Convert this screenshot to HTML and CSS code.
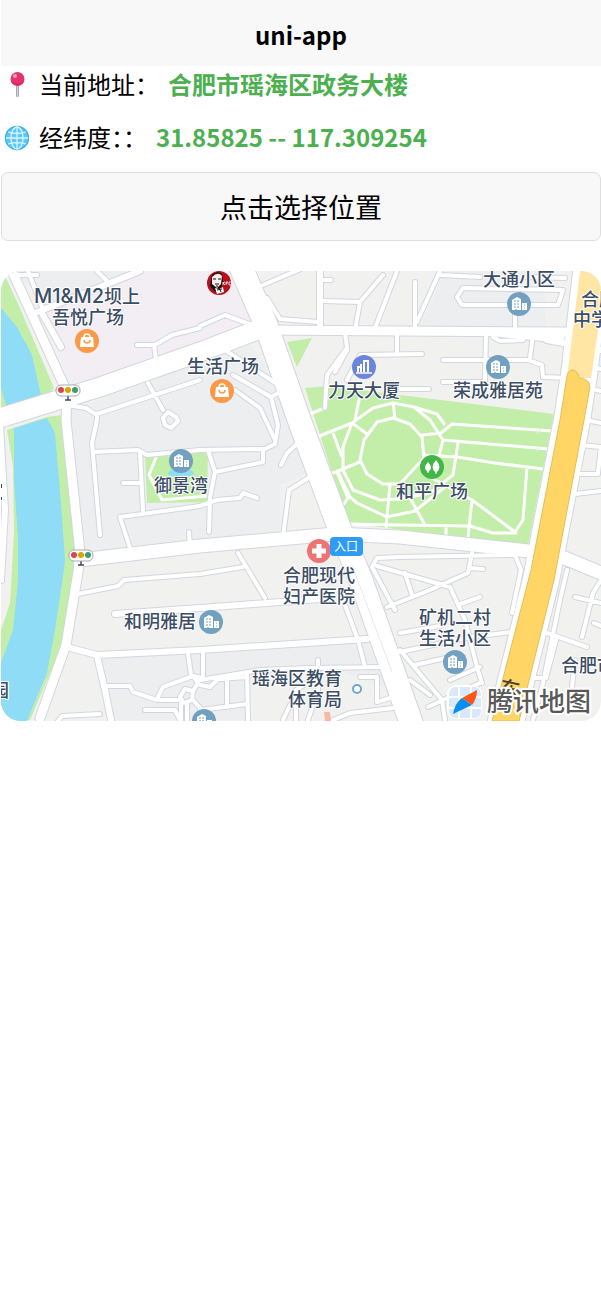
FILE: index.html
```
<!DOCTYPE html>
<html lang="zh-CN">

<head>
  <meta charset="UTF-8">
  <meta name="viewport" content="width=device-width, initial-scale=1.0">
  <title>uni-app</title>
  <link rel="stylesheet" href="styles.css">
</head>

<body>
  <header class="nav">
    <h1 class="title">uni-app</h1>
  </header>
  <main class="content">
    <div class="info">
      <p class="row">
        <svg class="icon" viewBox="0 0 28 28" aria-hidden="true">
          <rect x="12" y="13" width="3" height="14" rx="1" fill="#a9a4b8" />
          <rect x="13" y="13" width="1" height="14" fill="#d4d0dc" />
          <circle cx="13.500" cy="9" r="7" fill="#e5346c" />
          <path d="M7 11a7 7 0 0 0 13 0c-3 3-10 3-13 0z" fill="#d62a64" />
          <circle cx="11" cy="6" r="2" fill="#ff9dbb" />
        </svg>
        <span class="label">当前地址：</span>
        <span class="value">合肥市瑶海区政务大楼</span>
      </p>
      <p class="row">
        <svg class="icon" viewBox="0 0 28 28" aria-hidden="true">
          <circle cx="13" cy="15" r="12" fill="#5cc8fa" />
          <g fill="none" stroke="#d8f5ff" stroke-width="1.300">
            <circle cx="13" cy="15" r="11.500" stroke="#3fb0e6" />
            <ellipse cx="13" cy="15" rx="6" ry="11" />
            <path d="M13 4v22M2 15h22M4 9q9 3 18 0M4 21q9-3 18 0" />
          </g>
        </svg>
        <span class="label">经纬度：：</span>
        <span class="value">31.85825 -- 117.309254</span>
      </p>
    </div>
    <button class="choose" type="button">点击选择位置</button>

    <svg class="map" viewBox="1 271 600 450" role="img" aria-label="地图">
      <defs>
        <path id="lane" d="M12 275H37M28 271L42 307M97 271L107 281M200 326L225 315L252 325M200 328L172 335L155 345L137 345M154 345L156 360
          M67 405L86 408L97 415L97 420L92 443L100 535M97 414L200 380M148 383L163 410M163 418L168 412L176 417L178 421L171 428L165 425Z
          M225 350L280 386M233 375L271 397L280 392M271 397L278 425L275 444L263 450M235 390L260 408L275 440
          M93 452L138 450L147 455L200 450L263 449L263 462L215 472M208 450L215 472L210 497L209 532M123 483H140M140 452L143 511
          M120 517L200 506L217 500L240 498L243 493L257 498M120 517L131 551M189 532L190 547
          M298 443L287 453L281 465M313 475L289 490L283 537
          M267 298L280 319L318 322M323 280H331M323 301L360 302L383 275M360 302L355 330M397 271L375 328
          M345 333L347 348L327 375L325 408M335 372L347 350M347 380L360 355L422 354M397 334V352M263 285L303 268
          M415 282V330M440 271L417 322M440 275L480 277M525 277L565 278M457 297L463 288L563 290L558 305L462 305ZM515 305V330
          M486 335L485 382M443 360L528 360L542 365L543 377L570 378M530 358L533 335M493 337L500 341L523 340M443 382H485M400 389H429
          M586 365L601 369M583 387L601 391M580 419L601 423M580 445L601 447L598 473M578 474H598M575 494L601 491
          M78 594L118 586L124 580L200 574L243 567M238 553L265 598M105 686L130 686L133 692L157 700L178 700M157 699L163 687L193 676L203 678
          M188 653L191 675M180 697L185 689L193 691L192 700L184 703ZM181 703V721M187 703V721M145 710H175L180 720M58 721L62 716L100 714M193 676L198 683L193 691M193 700L202 710
          M200 680L260 670L310 668L383 667M203 651V675M247 672L248 720M200 710L247 704M200 685L210 687L218 679L247 677M227 680V707
          M345 605L358 640L365 667M318 660V690L308 720M318 676L296 690V720M360 677H377V702L390 698M393 708L350 713L333 720M283 720L290 705
          M400 557L515 555M472 553L468 573L430 590M470 568L483 569M515 555L521 570L512 613M400 557L377 558L372 567L395 610
          M387 607L425 592L468 573M377 566L450 587L465 620L477 667L482 683M405 573L412 595M458 605L480 597M400 633L440 626M400 652L470 637L513 632
          M415 665L450 657M428 707L480 683M450 680L480 667M400 650L442 700L445 720M410 680L430 695
          M601 580L593 593L582 637M575 597L601 603M547 633L587 647M594 623L601 626M535 678H546M567 570L560 600L543 683L533 720M575 660L570 705M556 640L546 678" />
        <path id="street" d="M35 313L140 271M43 315L61 347M320 271V328M115 614L200 608L320 599M67 647L97 655L200 650L367 639M97 656L105 690L111 720M547 340L601 350M0 425L5 510L1 580" />
        <path id="road" d="M12 271L67 392L66 420L80 553L78 572L66 645L40 718M266 330L400 331L570 332M495 332L560 338" />
        <path id="avenue" d="M80 560L200 546L335 534M335 534L400 537L528 551M555 554L601 573" />
        <path id="main" d="M0 418L100 387L200 352L265 327" />
        <path id="diagonal" d="M240 265L266 325L301 425L339 527L361 580L412 725" />
        <path id="expressway" d="M592 265L579 375L572 420L541 580L506 721" />
        <g id="bag">
          <circle r="12" fill="#fa9a48" />
          <path d="M-6-4H6L7 6H-7Z" fill="#fff" />
          <path d="M-3-4a3 3 0 0 1 6 0" fill="none" stroke="#fff" stroke-width="1.500" />
          <path d="M-3-1a3 3 0 0 0 6 0" fill="none" stroke="#fa9a48" stroke-width="1.500" />
        </g>
        <g id="estate">
          <circle r="12" fill="#72a0c0" />
          <path d="M-7 6V-4L-2-7L2-5V6ZM3 6V-1H8V6Z" fill="#fff" />
          <path d="M-5-3H-3M-2-3H0M-5 0H-3M-2 0H0M-5 3H-3M-2 3H0M5 1H6M5 4H6M-3 5V6" stroke="#72a0c0" stroke-width="1.200" />
        </g>
        <g id="signal">
          <path d="M0 6V10M-3 10H3" stroke="#454a63" stroke-width="1.500" />
          <rect x="-12" y="-5" width="24" height="11" rx="5" fill="#fff" stroke="#a9a9b2" />
          <circle cx="-7" r="3" fill="#d94848" />
          <circle r="3" fill="#d9a300" />
          <circle cx="7" r="3" fill="#3b9e6c" />
        </g>
      </defs>

      <rect class="land" x="1" y="271" width="600" height="450" />
      <path class="mall" d="M45 312L140 271H240L264 325L72 392Z" />
      <path class="block" d="M12 271H140L50 305ZM70 410L250 345L285 390L315 470L280 485V540L82 557ZM445 271H545V328H420ZM100 657L365 640L390 690L330 667L247 672V720H112Z" />
      <path class="green" d="M1 271L7 280L20 308L37 348L54 388L42 400L1 410ZM7 430L47 417L62 415L75 553V570L60 650L30 720H1V630L10 603L14 533L13 467Z" />
      <path class="water" d="M1 308L17 327L32 355L42 400L8 412L1 388ZM14 428L47 418L55 433L61 503L65 560L64 570L55 630L47 673L27 721H1V663L13 630L18 580V537L14 480Z" />
      <path class="green" d="M305 388L330 386L400 395L554 414L528 545L467 538L348 523ZM287 342L312 338L297 367ZM145 457L208 452L207 502L147 503Z" />
      <path class="path" d="M377 422L393 418L410 424L422 437L424 458L410 473L400 484H383L367 474L360 460L364 440ZM352 423L343 447V470L353 490L380 500L400 499L430 493L453 475L458 443M352 423L373 408L393 403L414 407L430 420L443 440L439 456
        M337 470L350 497L357 503L387 517L415 511L445 487M307 415L325 408M317 437L352 423L367 434M328 475L360 462M333 433L342 457M337 472L348 498L341 508M390 484L386 528M393 403L395 418M422 435L441 433L452 424L553 431M443 440L548 449
        M423 455L457 457L495 463L543 469M527 467L523 520L515 532L495 517L472 500L430 477M350 524L400 525L470 526L493 533H517M472 500L468 537M446 526V536M410 498L425 525M414 407L437 414L445 425M360 395L355 420M157 455L149 475L162 500L207 496" />
      <ellipse class="water" cx="181" cy="473" rx="13" ry="4" />

      <g class="casing">
        <use href="#lane" class="lane" />
        <use href="#street" class="street" />
        <use href="#road" class="road" />
        <use href="#avenue" class="avenue" />
        <use href="#main" class="main" />
        <use href="#diagonal" class="diagonal" />
        <use href="#expressway" class="expressway" />
      </g>
      <g class="surface">
        <use href="#lane" class="lane" />
        <use href="#street" class="street" />
        <use href="#road" class="road" />
        <use href="#avenue" class="avenue" />
        <use href="#main" class="main" />
        <use href="#diagonal" class="diagonal" />
        <use href="#expressway" class="expressway" />
      </g>
      <path class="divider" d="M352 565L392 672M537 429V434M540 429V434M537 446V451M540 446V451" />
      <path class="tunnel" d="M580 271H601L601 310L591 378H567Z" />
      <path class="elevated" d="M567 376Q568 370 573 370Q578 371 579 378Q583 378 586 380Q590 382 590 387L584 420L554 580L519 721H492L531 570L560 420Z" />
      <path class="spill" d="M324 712H330L331 721H325Z" />
      <path d="M1 484H2V488H1ZM1 497H2V500H1Z" fill="#3c4d66" />

      <use href="#bag" x="87" y="341" />
      <use href="#bag" x="222" y="391" />
      <use href="#estate" x="519" y="304" />
      <use href="#estate" x="498" y="367" />
      <use href="#estate" x="181" y="461" />
      <use href="#estate" x="211" y="622" />
      <use href="#estate" x="455" y="662" />
      <use href="#estate" x="204" y="721" />
      <use href="#signal" x="68" y="390" />
      <use href="#signal" x="81" y="555" />

      <g transform="translate(219 283)">
        <circle r="12" fill="#b5121b" />
        <path d="M-7-8Q-2-13 3-9L4-2L2 6L-4 9L-9 3Z" fill="#1b1414" />
        <path d="M-7-6Q-1-12 3-7L2 1L-2 5L-7 1Z" fill="#f6eeee" />
        <path d="M-6-4H-3M-1-4H2M-4 1H0M-2 2V4" stroke="#1b1414" />
        <path d="M-4 5L0 6L4 4L5 9L-2 11Z" fill="#fff" />
        <path d="M-2 7L3 6M0 5L2 9" stroke="#1b1414" />
        <path d="M4-1V2M4 0L6-1M4 0L6 2M7 2V-1H9M7 0H9M12-1H10V2H12" fill="none" stroke="#fff" stroke-width="0.800" />
      </g>
      <g transform="translate(364 367)">
        <circle r="12" fill="#6b84dc" />
        <path d="M-8 6H8" stroke="#fff" stroke-width="1.500" />
        <path d="M-6 5V0H-3M-3 5V-3M0 5V-6H4V5" fill="none" stroke="#fff" stroke-width="2" />
      </g>
      <g transform="translate(432 467)">
        <circle r="12" fill="#43b649" />
        <path d="M-4-5Q-10 1-4 5Q2 1-4-5ZM4-7Q-3 1 4 6Q11 1 4-7Z" fill="#fff" />
        <path d="M-4 4V6M4 5V7" stroke="#fff" />
      </g>
      <g transform="translate(319 551)">
        <circle r="12" fill="#ee7373" />
        <path d="M-7 0H7M0-7V7" stroke="#fff" stroke-width="5" />
      </g>
      <rect x="330" y="537" width="33" height="19" rx="4" fill="#2e9bf5" />
      <circle cx="357" cy="689" r="4" fill="#fff" stroke="#6fa5d3" stroke-width="2" />

      <g class="poi">
        <text x="87" y="303"><tspan class="latin">M1&amp;M2</tspan>坝上</text>
        <text x="88" y="324">吾悦广场</text>
        <text x="223" y="373">生活广场</text>
        <text x="364" y="397">力天大厦</text>
        <text x="498" y="397">荣成雅居苑</text>
        <text x="519" y="286">大通小区</text>
        <text x="599" y="306">合肥</text>
        <text x="591" y="326">中学</text>
        <text x="181" y="492">御景湾</text>
        <text x="432" y="498">和平广场</text>
        <text x="319" y="582">合肥现代</text>
        <text x="319" y="603">妇产医院</text>
        <text x="160" y="628">和明雅居</text>
        <text x="455" y="624">矿机二村</text>
        <text x="455" y="645">生活小区</text>
        <text x="588" y="672">合肥市</text>
        <text x="297" y="685">瑶海区教育</text>
        <text x="315" y="706">体育局</text>
        <text x="0" y="697">园</text>
      </g>
      <text class="street-name" x="510" y="696" transform="rotate(12 510 688)">东</text>
      <text class="entry" x="346" y="551">入口</text>

      <g transform="translate(448 685)">
        <rect x="-1" width="35" height="34" rx="9" fill="#fff" />
        <rect x="1" y="2" width="32" height="31" rx="7" fill="#d9e8fb" />
        <path d="M11 2V33M23 2V33M1 12H33M1 23H33" stroke="#fff" stroke-width="2" />
        <path d="M29 5L14 13L24 20Q29 14 29 5Z" fill="#fa5714" />
        <path d="M14 13Q7 18 5 29L24 20Z" fill="#098df2" />
      </g>
      <text class="brand" x="487" y="711">腾讯地图</text>
    </svg>
  </main>
</body>

</html>
```
FILE: styles.css
```
* {
  margin: 0;
  padding: 0;
  box-sizing: border-box;
}

body {
  padding-left: 1px;
  font-family: "Noto Sans CJK SC", sans-serif;
  color: #000;
  background-color: #fff;
}

.nav {
  display: flex;
  justify-content: center;
  align-items: center;
  height: 66px;
  padding-top: 2px;
  background-color: #f8f8f8;
}

.title {
  font-size: 24px;
  font-weight: 700;
}

.content {
  display: flex;
  flex-direction: column;
}

.info {
  display: flex;
  flex-direction: column;
  gap: 18px;
  padding: 0 3px 18px;
}

.row {
  display: flex;
  align-items: center;
  height: 35px;
  font-size: 24px;
}

.icon {
  flex: none;
  width: 28px;
  height: 28px;
  margin-right: 7px;
}

.value {
  margin-left: 9px;
  font-weight: 700;
  color: #4caf50;
}

.choose {
  height: 69px;
  margin-bottom: 30px;
  font-family: inherit;
  font-size: 27px;
  color: #000;
  background-color: #f8f8f8;
  border: 1px solid #dedede;
  border-radius: 7px;
  cursor: pointer;
}

.map {
  display: block;
  width: 100%;
  height: auto;
  border-radius: 20px;
}

.land {
  fill: #f1f1f0;
}

.mall {
  fill: #f2eef3;
}

.block {
  fill: #eceef0;
}

.green {
  fill: #c2eeaa;
}

.water {
  fill: #8fdcf7;
}

.path {
  fill: none;
  stroke: #fff;
  stroke-width: 3px;
  stroke-linejoin: round;
}

/* roads: the grey casing is drawn first, the white surface over it */
.casing,
.surface {
  fill: none;
  stroke-linecap: round;
  stroke-linejoin: round;
}

.casing {
  stroke: #d3d6de;
}

.surface {
  stroke: #fff;
}

.casing .lane {
  stroke-width: 6px;
}

.surface .lane {
  stroke-width: 4px;
}

.casing .street {
  stroke-width: 8px;
}

.surface .street {
  stroke-width: 6px;
}

.casing .road {
  stroke-width: 11px;
}

.surface .road {
  stroke-width: 9px;
}

.casing .avenue {
  stroke-width: 15px;
}

.surface .avenue {
  stroke-width: 13px;
}

.casing .main {
  stroke-width: 21px;
}

.surface .main {
  stroke-width: 19px;
}

.casing .diagonal {
  stroke-width: 25px;
}

.surface .diagonal {
  stroke-width: 23px;
}

.casing .expressway {
  stroke-width: 38px;
}

.surface .expressway {
  stroke-width: 36px;
}

.divider {
  fill: none;
  stroke: #e6e8ec;
}

.tunnel {
  fill: #ffe6a5;
}

.elevated {
  fill: #ffd666;
  stroke: #e3bd59;
}

.spill {
  fill: #fab9a5;
}

.poi {
  font-size: 18px;
  font-weight: 500;
  text-anchor: middle;
  fill: #3c4d66;
  stroke: #fff;
  stroke-width: 2px;
  stroke-linejoin: round;
  paint-order: stroke;
}

.latin {
  font-family: Inter, sans-serif;
  font-size: 20px;
}

.street-name {
  font-size: 20px;
  font-weight: 500;
  text-anchor: middle;
  fill: #4d3f2d;
}

.entry {
  font-size: 12px;
  text-anchor: middle;
  fill: #fff;
}

.brand {
  font-size: 26px;
  font-weight: 500;
  fill: #595959;
  stroke: #fff;
  stroke-width: 4px;
  stroke-linejoin: round;
  paint-order: stroke;
}
```
